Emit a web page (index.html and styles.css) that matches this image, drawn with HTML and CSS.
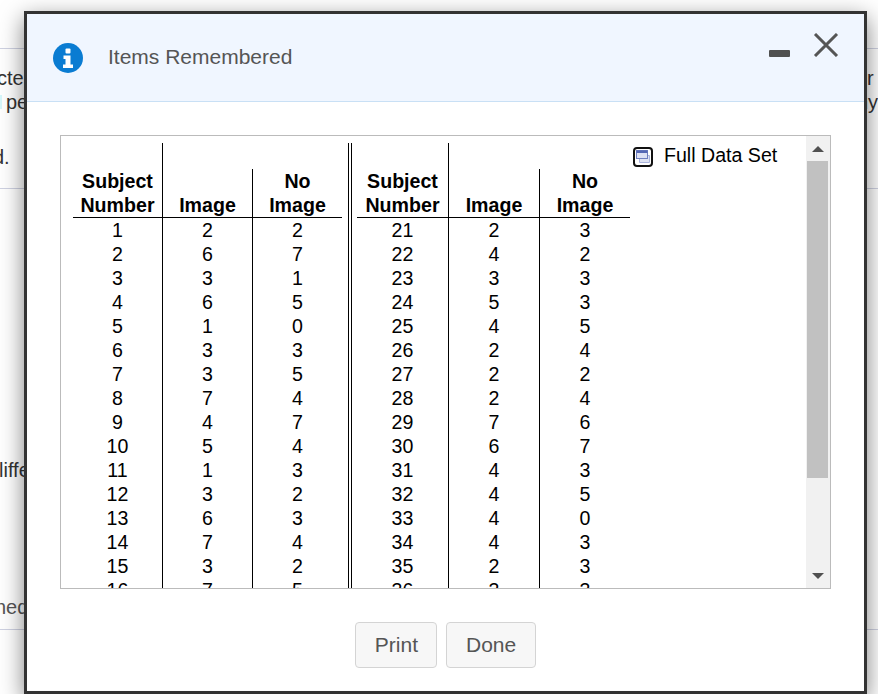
FILE: index.html
```html
<!DOCTYPE html>
<html lang="en">
<head>
    <meta charset="UTF-8">
    <meta name="viewport" content="width=device-width, initial-scale=1.0">
    <title>Items Remembered</title>
    <link rel="stylesheet" href="styles.css">
</head>
<body>

    <!-- page behind the dialog, only its edges show -->
    <div class="page">
        <section class="page-block first">
            <div class="page-line">
                <span class="side left cut-c">cted</span>
                <span class="side right indent-r">r</span>
            </div>
            <div class="page-line">
                <span class="side left"><span class="mark"></span>pe</span>
                <span class="side right">ny</span>
            </div>
            <div class="page-line gap-d">
                <span class="side left cut-d">d.</span>
            </div>
        </section>
        <section class="page-block second">
            <div class="page-line gap-iffe">
                <span class="side left cut-l">liffe</span>
            </div>
            <div class="page-line gap-ned">
                <span class="side left cut-n grey">ned</span>
            </div>
        </section>
        <section class="page-block"></section>
    </div>

    <div class="modal">
        <div class="modal-header">
            <svg class="info-icon" width="32" height="32" viewBox="0 0 32 32">
                <circle cx="16" cy="16" r="15" fill="#0a7cd2"/>
                <rect x="13.5" y="6.5" width="5" height="5" rx="1" fill="#fff"/>
                <path d="M11.5 13.5h7v9h2.5v3.5h-10v-3.5h2.5v-5.5h-2z" fill="#fff"/>
            </svg>
            <span class="modal-title">Items Remembered</span>
            <div class="modal-controls">
                <span class="minimize"></span>
                <svg class="close-icon" width="26" height="24" viewBox="0 0 26 24">
                    <path d="M2 1l22 22M24 1L2 23" stroke="#555" stroke-width="3" fill="none"/>
                </svg>
            </div>
        </div>

        <div class="modal-body">
            <div class="data-box">
                <div class="data-content">
                    <table class="data-table first-table">
                        <colgroup><col class="c90"><col class="c90"><col class="c89"></colgroup>
                        <tr class="head-top"><th class="line"></th><th colspan="2"></th></tr>
                        <tr class="head-main"><th class="line">Subject<br>Number</th><th class="line">Image</th><th>No<br>Image</th></tr>
                        <tr><td class="line">1</td><td class="line">2</td><td>2</td></tr>
                        <tr><td class="line">2</td><td class="line">6</td><td>7</td></tr>
                        <tr><td class="line">3</td><td class="line">3</td><td>1</td></tr>
                        <tr><td class="line">4</td><td class="line">6</td><td>5</td></tr>
                        <tr><td class="line">5</td><td class="line">1</td><td>0</td></tr>
                        <tr><td class="line">6</td><td class="line">3</td><td>3</td></tr>
                        <tr><td class="line">7</td><td class="line">3</td><td>5</td></tr>
                        <tr><td class="line">8</td><td class="line">7</td><td>4</td></tr>
                        <tr><td class="line">9</td><td class="line">4</td><td>7</td></tr>
                        <tr><td class="line">10</td><td class="line">5</td><td>4</td></tr>
                        <tr><td class="line">11</td><td class="line">1</td><td>3</td></tr>
                        <tr><td class="line">12</td><td class="line">3</td><td>2</td></tr>
                        <tr><td class="line">13</td><td class="line">6</td><td>3</td></tr>
                        <tr><td class="line">14</td><td class="line">7</td><td>4</td></tr>
                        <tr><td class="line">15</td><td class="line">3</td><td>2</td></tr>
                        <tr><td class="line">16</td><td class="line">7</td><td>5</td></tr>
                    </table>
                    <div class="double-line"></div>
                    <table class="data-table second-table">
                        <colgroup><col class="c92"><col class="c91"><col class="c90"></colgroup>
                        <tr class="head-top"><th class="line"></th><th colspan="2"></th></tr>
                        <tr class="head-main"><th class="line">Subject<br>Number</th><th class="line">Image</th><th>No<br>Image</th></tr>
                        <tr><td class="line">21</td><td class="line">2</td><td>3</td></tr>
                        <tr><td class="line">22</td><td class="line">4</td><td>2</td></tr>
                        <tr><td class="line">23</td><td class="line">3</td><td>3</td></tr>
                        <tr><td class="line">24</td><td class="line">5</td><td>3</td></tr>
                        <tr><td class="line">25</td><td class="line">4</td><td>5</td></tr>
                        <tr><td class="line">26</td><td class="line">2</td><td>4</td></tr>
                        <tr><td class="line">27</td><td class="line">2</td><td>2</td></tr>
                        <tr><td class="line">28</td><td class="line">2</td><td>4</td></tr>
                        <tr><td class="line">29</td><td class="line">7</td><td>6</td></tr>
                        <tr><td class="line">30</td><td class="line">6</td><td>7</td></tr>
                        <tr><td class="line">31</td><td class="line">4</td><td>3</td></tr>
                        <tr><td class="line">32</td><td class="line">4</td><td>5</td></tr>
                        <tr><td class="line">33</td><td class="line">4</td><td>0</td></tr>
                        <tr><td class="line">34</td><td class="line">4</td><td>3</td></tr>
                        <tr><td class="line">35</td><td class="line">2</td><td>3</td></tr>
                        <tr><td class="line">36</td><td class="line">3</td><td>3</td></tr>
                    </table>
                    <div class="full-data">
                        <svg class="full-icon" width="20" height="20" viewBox="0 0 20 20">
                            <rect x="1" y="1" width="18" height="18" rx="3" fill="#fff" stroke="#111" stroke-width="2"/>
                            <path d="M6.5 11.5v4h10v-7h-2" fill="#dfe3f3" stroke="#aab4dc" stroke-width="1"/>
                            <rect x="3.5" y="3.5" width="11" height="8" fill="#dde1f4" stroke="#6f7fc0" stroke-width="1"/>
                            <rect x="3.5" y="3.5" width="11" height="2.5" fill="#5568b4"/>
                        </svg>
                        <span>Full Data Set</span>
                    </div>
                </div>
                <div class="scrollbar">
                    <div class="scroll-btn"><span class="arrow-up"></span></div>
                    <div class="scroll-thumb"></div>
                    <div class="scroll-space"></div>
                    <div class="scroll-btn"><span class="arrow-down"></span></div>
                </div>
            </div>
        </div>

        <div class="modal-footer">
            <button type="button" class="btn">Print</button>
            <button type="button" class="btn">Done</button>
        </div>
    </div>

</body>
</html>
```

FILE: styles.css
```css
html, body {
    height: 100%;
}

body {
    margin: 0;
    font-family: 'Liberation Sans', Arial, sans-serif;
    background-color: #fff;
    color: #333;
    overflow: hidden;
}

/* page behind */
.page {
    padding-top: 48px;
    font-size: 20px;
    line-height: 24px;
}

.page-block {
    border-top: 1px solid #cfd2e2;
}

.page-block.first {
    padding: 17px 0 19px;
}

.page-block.second {
    padding-bottom: 10px;
}

.page-line {
    display: flex;
    justify-content: space-between;
    height: 24px;
}

.gap-d {
    margin-top: 31px;
}

.gap-iffe {
    margin-top: 269px;
}

.gap-ned {
    margin-top: 113px;
}

.side {
    white-space: nowrap;
    overflow: hidden;
}

.side.left {
    width: 40px;
}

.side.right {
    width: 21px;
}

.cut-c {
    text-indent: -3px;
}

.cut-d {
    text-indent: -7px;
}

.cut-l {
    text-indent: -1px;
}

.cut-n {
    text-indent: -5px;
}

.indent-r {
    text-indent: 10px;
}

.grey {
    color: #555;
}

.mark {
    display: inline-block;
    width: 2px;
    height: 14px;
    margin-right: 4px;
    background-color: #d6f7fb;
}

/* dialog */
.modal {
    position: absolute;
    left: 24px;
    top: 11px;
    width: 843px;
    height: 683px;
    box-sizing: border-box;
    border: 3px solid #333;
    background-color: #fff;
    box-shadow: 0 7px 22px rgba(0, 0, 0, 0.5);
    display: flex;
    flex-direction: column;
}

.modal-header {
    display: flex;
    align-items: center;
    height: 87px;
    padding: 0 25px 0 25px;
    background-color: #f0f6ff;
    border-bottom: 1px solid #c9e0f5;
}

.info-icon {
    flex: none;
    margin-top: 1px;
}

.modal-title {
    margin: 0 0 2px 24px;
    font-size: 21px;
    color: #555;
}

.modal-controls {
    display: flex;
    align-items: flex-end;
    gap: 23px;
    align-self: flex-start;
    margin-left: auto;
    padding-top: 19px;
}

.minimize {
    width: 21px;
    height: 7px;
    border-radius: 1px;
    background-color: #505050;
}

.modal-body {
    padding: 33px 33px 0 33px;
}

.data-box {
    display: flex;
    height: 452px;
    border: 1px solid #bbb;
}

.data-content {
    flex: 1;
    display: flex;
    align-items: flex-start;
    padding: 7px 0 0 12px;
    overflow: hidden;
}

.data-table {
    flex: none;
    table-layout: fixed;
    border-collapse: separate;
    border-spacing: 0;
    font-size: 19.6px;
    line-height: 24px;
    color: #000;
    text-align: center;
}

.first-table {
    width: 269px;
}

.second-table {
    width: 273px;
}

.c89 { width: 89px; }
.c90 { width: 90px; }
.c91 { width: 91px; }
.c92 { width: 92px; }

.data-table th,
.data-table td {
    padding: 0;
    box-sizing: border-box;
}

.data-table .line {
    border-right: 1px solid #000;
}

.head-top th {
    height: 26px;
}

.head-main th {
    height: 49px;
    vertical-align: bottom;
    border-bottom: 1px solid #000;
}

.data-table td {
    height: 24px;
}

.double-line {
    flex: none;
    align-self: stretch;
    width: 4px;
    margin: 0 5px 0 6px;
    border-left: 1px solid #000;
    border-right: 1px solid #000;
    box-sizing: border-box;
}

.full-data {
    flex: none;
    display: flex;
    align-items: flex-start;
    gap: 11px;
    margin-left: 3px;
    font-size: 19.6px;
    line-height: 24px;
    color: #000;
}

.full-icon {
    margin-top: 4px;
}

.scrollbar {
    flex: none;
    display: flex;
    flex-direction: column;
    width: 24px;
    background-color: #f1f1f1;
}

.scroll-btn {
    flex: none;
    display: flex;
    align-items: center;
    justify-content: center;
    height: 25px;
}

.arrow-up,
.arrow-down {
    width: 0;
    height: 0;
    border-left: 6px solid transparent;
    border-right: 6px solid transparent;
}

.arrow-up {
    border-bottom: 6px solid #505050;
}

.arrow-down {
    border-top: 6px solid #505050;
}

.scroll-thumb {
    flex: none;
    height: 317px;
    margin: 0 2px 0 1px;
    background-color: #c1c1c1;
}

.scroll-space {
    flex: 1;
}

.modal-footer {
    display: flex;
    justify-content: center;
    gap: 9px;
    margin-top: 33px;
}

.btn {
    height: 46px;
    padding: 0 18.5px;
    font-family: inherit;
    font-size: 21px;
    color: #555;
    background-color: #f7f7f7;
    border: 1px solid #d4d4d4;
    border-radius: 4px;
}
```
